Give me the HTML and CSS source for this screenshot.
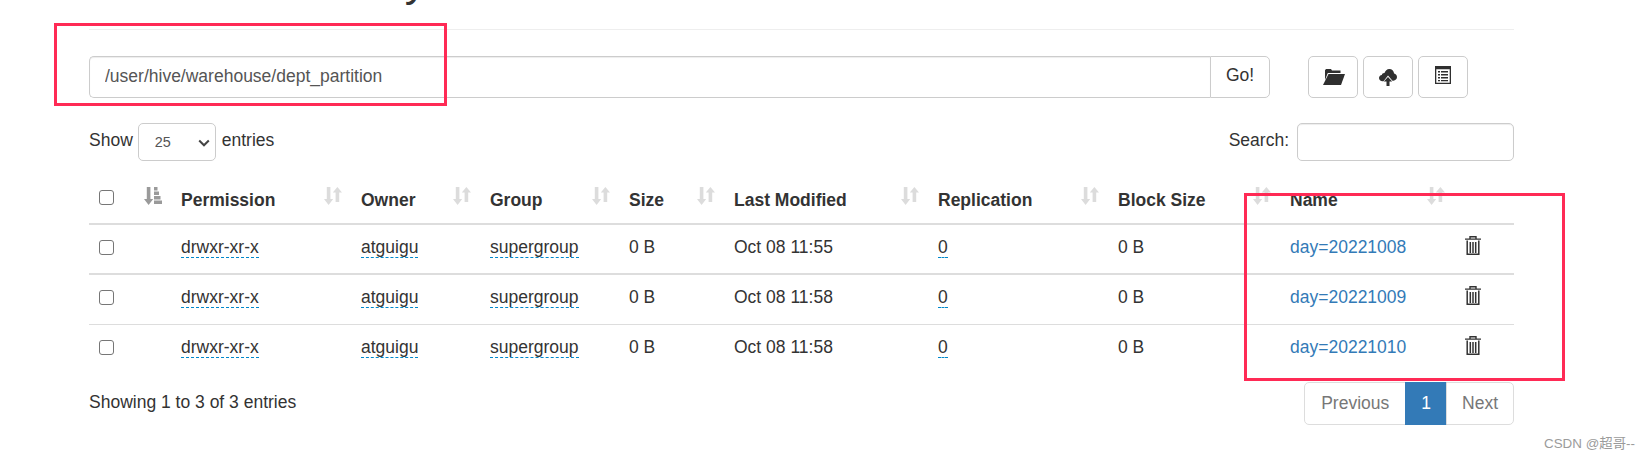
FILE: index.html
```html
<!DOCTYPE html>
<html lang="en">
<head>
<meta charset="utf-8">
<title>Browse Directory</title>
<link rel="stylesheet" href="styles.css">
</head>
<body>
<svg class="defs" width="0" height="0" aria-hidden="true">
  <defs>
    <symbol id="sort" viewBox="0 0 18 18"><path d="M2.800 0h3.600v12H9.200l-4.600 6L0 12h2.800z"/><path d="M11.600 15h3.600V5.500H18L13.400 0 8.800 5.500h2.800z"/></symbol>
    <symbol id="sort-attr" viewBox="0 0 18 18"><path d="M2.800 0h3.600v12H9.200l-4.600 6L0 12h2.800z"/><path d="M10 0h3.500v3.500H10zM10 4.500h5v3.500h-5zM10 9h6.500v3.500H10zM10 13.500h8v3.500h-8z"/></symbol>
    <symbol id="trash" viewBox="0 0 16 19"><path d="M5 3V.7h6V3M0 3.100h16" fill="none" stroke="currentColor" stroke-width="1.400"/><path d="M2.200 4.500v13.700h11.600V4.500M5.300 6v11M8 6v11M10.700 6v11" fill="none" stroke="currentColor" stroke-width="1.500"/></symbol>
  </defs>
</svg>

<div class="page">
  <div class="content">
    <header class="page-header"><h1>Browse Directory</h1></header>

    <div class="toolbar">
      <div class="path-group">
        <input class="path-input" type="text" value="/user/hive/warehouse/dept_partition">
        <button class="go-btn" type="button">Go!</button>
      </div>
      <div class="tool-btns">
        <button class="tool-btn" type="button" aria-label="Create directory">
          <svg class="ico-folder" viewBox="0 0 22 16"><path d="M2 11V1.200L3 0h5l1 1.500h8.500V4H4.800z"/><path d="M5.500 5H22l-4 11H0z"/></svg>
        </button>
        <button class="tool-btn" type="button" aria-label="Upload">
          <svg class="ico-cloud" viewBox="0 0 18 17"><path d="M4.500 12.300H3.500C1.500 12.300 0 10.900 0 9.100c0-1.600 1.200-2.900 2.800-3.100C3 4.700 4.200 3.800 5.500 4 6.200 1.700 8 0 10.300 0c2.600 0 4.600 2 4.800 4.600 1.700.4 2.900 1.800 2.900 3.500 0 2-1.600 3.600-3.600 3.600h-.9L9 6.500z"/><path d="M9 8l4.200 4.500h-2.700V17h-3v-4.500H4.800z"/></svg>
        </button>
        <button class="tool-btn" type="button" aria-label="Cut and paste">
          <svg class="ico-list" viewBox="0 0 16 18"><path fill-rule="evenodd" d="M0 0h16v18H0zM1.300 3.300v13.400h13.400V3.300z"/><path d="M3 5h2v1.500H3zM6 5h7v1.500H6zM3 8h2v1.500H3zM6 8h7v1.500H6zM3 11h2v1.500H3zM6 11h7v1.500H6zM3 14h2v1.300H3zM6 14h7v1.300H6z"/></svg>
        </button>
      </div>
    </div>

    <div class="controls">
      <label class="length">Show
        <span class="select-wrap">
          <select class="length-select"><option>25</option><option>50</option><option>100</option></select>
          <svg class="chevron" viewBox="0 0 12 8"><path d="M1.200 1.500L6 6.300l4.800-4.800" fill="none" stroke="#444" stroke-width="2"/></svg>
        </span>
        entries</label>
      <label class="search">Search: <input class="search-input" type="text"></label>
    </div>

    <table class="files">
      <colgroup>
        <col class="c-check"><col class="c-sort"><col class="c-perm"><col class="c-owner"><col class="c-group"><col class="c-size"><col class="c-mod"><col class="c-repl"><col class="c-block"><col class="c-name"><col class="c-del">
      </colgroup>
      <thead>
        <tr>
          <th class="cell-check"><input class="check" type="checkbox"></th>
          <th class="cell-sort"><div class="th-inner end"><svg class="sort-ico active"><use href="#sort-attr"/></svg></div></th>
          <th><div class="th-inner">Permission<svg class="sort-ico"><use href="#sort"/></svg></div></th>
          <th><div class="th-inner">Owner<svg class="sort-ico"><use href="#sort"/></svg></div></th>
          <th><div class="th-inner">Group<svg class="sort-ico"><use href="#sort"/></svg></div></th>
          <th><div class="th-inner">Size<svg class="sort-ico"><use href="#sort"/></svg></div></th>
          <th><div class="th-inner">Last Modified<svg class="sort-ico"><use href="#sort"/></svg></div></th>
          <th><div class="th-inner">Replication<svg class="sort-ico"><use href="#sort"/></svg></div></th>
          <th><div class="th-inner">Block Size<svg class="sort-ico"><use href="#sort"/></svg></div></th>
          <th><div class="th-inner">Name<svg class="sort-ico"><use href="#sort"/></svg></div></th>
          <th></th>
        </tr>
      </thead>
      <tbody>
        <tr class="row-strong">
          <td class="cell-check"><input class="check" type="checkbox"></td><td></td>
          <td><span class="editable">drwxr-xr-x</span></td><td><span class="editable">atguigu</span></td><td><span class="editable">supergroup</span></td>
          <td>0 B</td><td>Oct 08 11:55</td><td><span class="editable">0</span></td><td>0 B</td>
          <td><a class="name-link" href="#">day=20221008</a></td>
          <td class="cell-del"><svg class="trash"><use href="#trash"/></svg></td>
        </tr>
        <tr>
          <td class="cell-check"><input class="check" type="checkbox"></td><td></td>
          <td><span class="editable">drwxr-xr-x</span></td><td><span class="editable">atguigu</span></td><td><span class="editable">supergroup</span></td>
          <td>0 B</td><td>Oct 08 11:58</td><td><span class="editable">0</span></td><td>0 B</td>
          <td><a class="name-link" href="#">day=20221009</a></td>
          <td class="cell-del"><svg class="trash"><use href="#trash"/></svg></td>
        </tr>
        <tr>
          <td class="cell-check"><input class="check" type="checkbox"></td><td></td>
          <td><span class="editable">drwxr-xr-x</span></td><td><span class="editable">atguigu</span></td><td><span class="editable">supergroup</span></td>
          <td>0 B</td><td>Oct 08 11:58</td><td><span class="editable">0</span></td><td>0 B</td>
          <td><a class="name-link" href="#">day=20221010</a></td>
          <td class="cell-del"><svg class="trash"><use href="#trash"/></svg></td>
        </tr>
      </tbody>
    </table>

    <div class="table-foot">
      <div class="info">Showing 1 to 3 of 3 entries</div>
      <nav class="pager">
        <a class="pg-link" href="#">Previous</a>
        <a class="pg-link current" href="#">1</a>
        <a class="pg-link" href="#">Next</a>
      </nav>
    </div>
  </div>
  <hr class="foot-rule">
</div>

<div class="mark mark-path"></div>
<div class="mark mark-name"></div>
<div class="watermark">CSDN @超哥--</div>
</body>
</html>
```
FILE: styles.css
```css
* { box-sizing: border-box; }
html, body { margin: 0; height: 460px; overflow: hidden; background: #fff; }
body {
  font-family: "Liberation Sans", Arial, sans-serif;
  font-size: 17.5px;
  line-height: 1.43;
  color: #333;
  position: relative;
}
.defs { position: absolute; }
.page { margin-left: 70px; width: 1463px; }
.content { padding: 0 19px; }

.page-header { height: 30px; border-bottom: 1px solid #eee; }
.page-header h1 {
  margin: 0;
  position: relative;
  top: -41px;
  font-size: 44.4px;
  line-height: 44px;
  font-weight: 400;
  white-space: nowrap;
}

.toolbar { display: flex; margin-top: 26px; height: 42px; }
.path-group { display: flex; width: 1181px; }
.path-input {
  flex: 1;
  min-width: 0;
  height: 42px;
  padding: 0 15px 2px;
  border: 1px solid #ccc;
  border-right: 0;
  border-radius: 5px 0 0 5px;
  font: inherit;
  color: #555;
  box-shadow: inset 0 1px 1px rgba(0,0,0,.075);
  outline: none;
}
.go-btn {
  width: 60px;
  height: 42px;
  padding: 0 0 2px;
  background: #fff;
  border: 1px solid #ccc;
  border-radius: 0 5px 5px 0;
  font: inherit;
  color: #333;
}
.tool-btns { display: flex; gap: 5px; margin-left: 38px; }
.tool-btn {
  display: flex;
  align-items: center;
  justify-content: center;
  width: 50px;
  height: 42px;
  padding: 0;
  background: #fff;
  border: 1px solid #ccc;
  border-radius: 5px;
}
.tool-btn svg { display: block; fill: #2f2f2f; }
.ico-folder { width: 22px; height: 16px; margin-left: 2px; margin-top: -1px; }
.ico-cloud { width: 18px; height: 17px; margin-top: 0; }
.ico-list { width: 16px; height: 18px; margin-top: -4px; }

.controls {
  display: flex;
  justify-content: space-between;
  align-items: center;
  margin-top: 25px;
  height: 38px;
}
.length { display: flex; align-items: center; gap: 5px; margin-top: -2px; }
.select-wrap { position: relative; display: block; width: 78px; height: 38px; margin: 2px 1px 0 0; }
.length-select {
  appearance: none;
  display: block;
  width: 78px;
  height: 38px;
  padding: 0 16px;
  background: #fff;
  border: 1px solid #ccc;
  border-radius: 5px;
  font-family: inherit;
  font-size: 14.4px;
  color: #555;
}
.chevron { position: absolute; right: 6px; top: 16px; width: 12px; height: 8px; pointer-events: none; }
.search { display: flex; align-items: center; gap: 8px; margin-top: -2px; }
.search-input {
  width: 217px;
  height: 38px;
  margin-top: 2px;
  border: 1px solid #ccc;
  border-radius: 5px;
  box-shadow: inset 0 1px 1px rgba(0,0,0,.075);
  outline: none;
}

.files { width: 1425px; table-layout: fixed; border-collapse: collapse; }
.c-check { width: 44px; }
.c-sort { width: 38px; }
.c-perm { width: 180px; }
.c-owner { width: 129px; }
.c-group { width: 139px; }
.c-size { width: 105px; }
.c-mod { width: 204px; }
.c-repl { width: 180px; }
.c-block { width: 172px; }
.c-name { width: 174px; }
.c-del { width: 60px; }

.files th {
  height: 63px;
  padding: 0 9px 0 10px;
  border-bottom: 2px solid #ddd;
  font-weight: 700;
  text-align: left;
  vertical-align: top;
}
.th-inner {
  display: flex;
  justify-content: space-between;
  align-items: flex-start;
  padding-top: 26px;
  line-height: 26px;
  white-space: nowrap;
}
.th-inner.end { justify-content: flex-end; }
.sort-ico { width: 18px; height: 18px; fill: #dcdcdc; flex: none; }
.sort-ico.active { fill: #9a9a9a; }

.files td {
  height: 50px;
  padding: 0 10px 3px;
  border-top: 1px solid #ddd;
  vertical-align: middle;
  white-space: nowrap;
}
.files tbody tr:first-child td { border-top: 0; }
.row-strong td { border-bottom: 2px solid #ddd; }
.files th.cell-check, .files td.cell-check { padding: 0 0 0 10px; }
.check {
  appearance: none;
  display: block;
  width: 15px;
  height: 15px;
  margin: 0;
  background: #fff;
  border: 1.4px solid #767676;
  border-radius: 3px;
}
.files th.cell-check .check { margin-top: 29px; }
.files td.cell-check .check { margin-top: -4px; }
.editable { border-bottom: 1px dashed #0088cc; }
.name-link { color: #337ab7; text-decoration: none; }
.files td.cell-del { line-height: 0; padding-bottom: 0; }
.trash { display: block; width: 16px; height: 19px; margin: -8px 0 0 1px; color: #333; }

.table-foot {
  display: flex;
  justify-content: space-between;
  align-items: center;
  margin-top: 8px;
  height: 43px;
}
.info { margin-top: -1px; }
.pager { display: flex; height: 43px; }
.pg-link {
  display: flex;
  align-items: center;
  padding: 0 15px;
  color: #777;
  text-decoration: none;
  background: #fff;
  border: 1px solid #ddd;
  margin-left: -1px;
}
.pg-link:first-child { margin-left: 0; padding: 0 16px; border-radius: 5px 0 0 5px; }
.pg-link:last-child { border-radius: 0 5px 5px 0; }
.pg-link.current { background: #337ab7; border-color: #337ab7; color: #fff; }

.foot-rule { margin: 36px 0 0; height: 1px; border: 0; background: #eee; }

.mark { position: absolute; border: 3px solid #ff2a55; }
.mark-path { left: 54px; top: 23px; width: 393px; height: 83px; }
.mark-name { left: 1244px; top: 193px; width: 321px; height: 188px; }
.watermark {
  position: absolute;
  left: 1544px;
  top: 435px;
  font-family: "Liberation Sans", "Noto Sans CJK SC", sans-serif;
  font-size: 13.4px;
  line-height: 18px;
  color: #9b9b9b;
  white-space: nowrap;
}
```
